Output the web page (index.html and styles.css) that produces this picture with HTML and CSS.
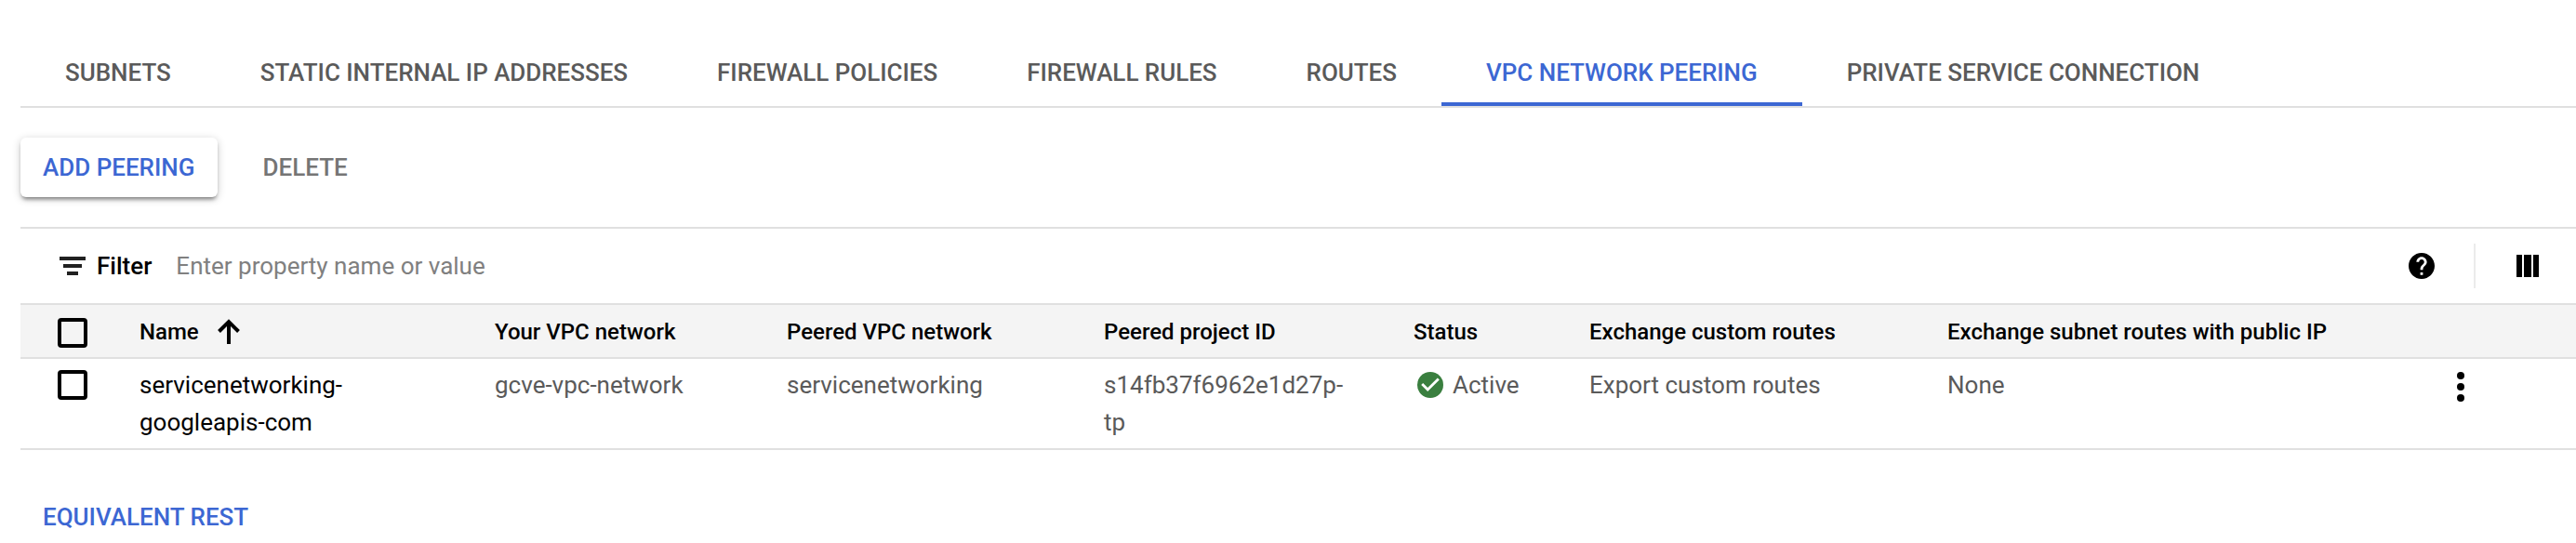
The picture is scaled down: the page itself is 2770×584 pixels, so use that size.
FILE: index.html
```
<!DOCTYPE html>
<html lang="en">
<head>
    <meta charset="UTF-8">
    <meta name="viewport" content="width=device-width, initial-scale=1.0">
    <title>VPC network peering</title>
    <link rel="stylesheet" href="styles.css">
</head>
<body>
    <div class="page">
        <nav class="tabs">
            <a class="tab">SUBNETS</a>
            <a class="tab">STATIC INTERNAL IP ADDRESSES</a>
            <a class="tab">FIREWALL POLICIES</a>
            <a class="tab">FIREWALL RULES</a>
            <a class="tab">ROUTES</a>
            <a class="tab active">VPC NETWORK PEERING</a>
            <a class="tab">PRIVATE SERVICE CONNECTION</a>
        </nav>

        <div class="actions">
            <button class="btn raised">ADD PEERING</button>
            <button class="btn disabled">DELETE</button>
        </div>

        <!-- Filter bar -->
        <div class="filter">
            <svg class="filter-icon" width="28" height="20" viewBox="0 0 28 20">
                <path d="M0 0h28v4H0zM4 8h20v4H4zM8 16h12v4H8z" fill="#212121"/>
            </svg>
            <span class="filter-label">Filter</span>
            <span class="filter-hint">Enter property name or value</span>
            <div class="filter-tools">
                <svg width="28" height="28" viewBox="2 2 20 20">
                    <path d="M12 2C6.480 2 2 6.480 2 12s4.480 10 10 10 10-4.480 10-10S17.520 2 12 2zm1 17h-2v-2h2v2zm2.070-7.750l-.9.920C13.450 12.900 13 13.500 13 15h-2v-.5c0-1.100.450-2.100 1.170-2.830l1.240-1.260c.370-.360.590-.860.590-1.410 0-1.100-.9-2-2-2s-2 .9-2 2H8c0-2.210 1.790-4 4-4s4 1.790 4 4c0 .880-.360 1.680-.930 2.250z"/>
                </svg>
                <span class="divider"></span>
                <svg width="24" height="24" viewBox="0 0 24 24">
                    <path d="M0 0h6v24H0zM8 0h8v24H8zM18 0h6v24h-6z"/>
                </svg>
            </div>
        </div>

        <div class="row head">
            <div class="check"><span class="box"></span></div>
            <div class="name">Name
                <svg class="sort" width="24" height="27" viewBox="0 0 24 27">
                    <path d="M12 27V3M1.500 13.500L12 3 22.500 13.500" fill="none" stroke="#000" stroke-width="4"/>
                </svg>
            </div>
            <div>Your VPC network</div>
            <div>Peered VPC network</div>
            <div>Peered project ID</div>
            <div>Status</div>
            <div>Exchange custom routes</div>
            <div>Exchange subnet routes with public IP</div>
            <div></div>
        </div>

        <div class="row">
            <div class="check"><span class="box"></span></div>
            <div class="name">servicenetworking-<br>googleapis-com</div>
            <div>gcve-vpc-network</div>
            <div>servicenetworking</div>
            <div>s14fb37f6962e1d27p-<br>tp</div>
            <div class="status">
                <svg width="28" height="28" viewBox="2 2 20 20">
                    <circle cx="12" cy="12" r="10" fill="#3a7f3f"/>
                    <path d="M10 17l-5-5 1.410-1.410L10 14.170l7.590-7.590L19 8z" fill="#fff"/>
                </svg>
                <span>Active</span>
            </div>
            <div>Export custom routes</div>
            <div>None</div>
            <div class="menu">
                <svg width="8" height="32" viewBox="0 0 8 32">
                    <circle cx="4" cy="4" r="4"/>
                    <circle cx="4" cy="16" r="4"/>
                    <circle cx="4" cy="28" r="4"/>
                </svg>
            </div>
        </div>

        <a class="rest">EQUIVALENT REST</a>
    </div>
</body>
</html>
```
FILE: styles.css
```
* {
    box-sizing: border-box;
}

body {
    margin: 0;
    background-color: #fff;
    font-family: Roboto, sans-serif;
    font-size: 26px;
    line-height: 40px;
    color: #5a5a5a;
}

svg {
    display: block;
    flex-shrink: 0;
}

.page {
    height: 584px;
    padding: 42px 0 0 22px;
    overflow: hidden;
}

/* Tabs */
.tabs {
    display: flex;
    height: 74px;
    border-bottom: 2px solid #e0e0e0;
}

.tab {
    height: 72px;
    padding: 16px 48px 0;
    font-weight: 500;
    letter-spacing: -0.025px;
    white-space: nowrap;
}

.tab.active {
    color: #3c67d3;
    border-bottom: 4px solid #3c67d3;
}

/* Buttons */
.actions {
    display: flex;
    height: 128px;
    padding-top: 32px;
}

.btn {
    height: 64px;
    padding: 0 24px;
    border: none;
    border-radius: 6px;
    background-color: #fff;
    font-family: inherit;
    font-size: 26px;
    font-weight: 500;
    color: #3c67d3;
}

.btn.raised {
    box-shadow: 0 4px 4px -2px rgba(0, 0, 0, 0.45), 0 2px 10px rgba(0, 0, 0, 0.2);
}

.btn.disabled {
    margin-left: 25px;
    color: #757575;
}

/* Filter bar */
.filter {
    display: flex;
    align-items: center;
    height: 84px;
    padding: 0 40px 0 42px;
    border-top: 2px solid #e0e0e0;
    border-bottom: 2px solid #e0e0e0;
}

.filter-label {
    margin-left: 12px;
    font-weight: 500;
    color: #000;
}

.filter-hint {
    margin-left: 26px;
    color: #808080;
}

.filter-tools {
    display: flex;
    align-items: center;
    margin-left: auto;
}

.divider {
    width: 2px;
    height: 48px;
    margin: 0 44px 0 42px;
    background-color: #ebebeb;
}

/* Table */
.row {
    display: grid;
    grid-template-columns: 128px 382px 314px 341px 333px 189px 385px 548px 1fr;
    height: 98px;
    padding-top: 8px;
    border-bottom: 2px solid #e0e0e0;
    white-space: nowrap;
}

.row.head {
    height: 58px;
    padding-top: 9px;
    background-color: #f4f4f4;
    font-size: 24px;
    font-weight: 500;
    color: #000;
}

.check {
    padding: 4px 0 0 40px;
}

.head .check {
    padding-top: 5px;
}

.box {
    display: block;
    width: 32px;
    height: 32px;
    border: 4px solid #000;
    border-radius: 4px;
}

.name {
    display: flex;
    color: #000;
}

.sort {
    margin: 6px 0 0 20px;
}

.status {
    display: flex;
    gap: 10px;
    padding: 0 0 0 4px;
}

.status svg {
    margin-top: 6px;
}

.menu svg {
    margin-top: 6px;
}

.rest {
    display: block;
    margin: 52px 0 0 24px;
    font-weight: 500;
    color: #3c67d3;
}
```
